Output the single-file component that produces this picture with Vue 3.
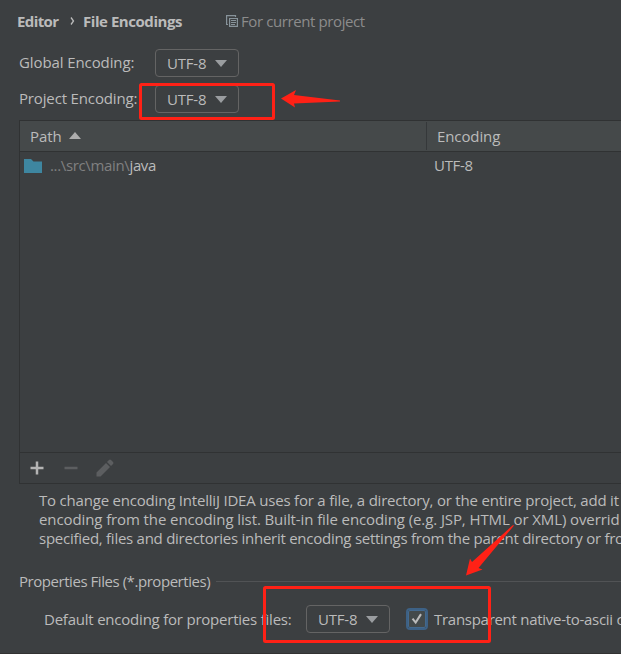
<script setup>
import { ref } from 'vue'

const globalEncoding = ref('UTF-8')
const projectEncoding = ref('UTF-8')
const propertiesEncoding = ref('UTF-8')
const help = [
  'To change encoding IntelliJ IDEA uses for a file, a directory, or the entire project, add it',
  'encoding from the encoding list. Built-in file encoding (e.g. JSP, HTML or XML) overrid',
  'specified, files and directories inherit encoding settings from the parent directory or fro'
]
</script>

<template>
  <main class="settings">
    <header class="crumbs">
      <b class="crumb-root">Editor</b>
      <svg class="chevron" width="6" height="10" viewBox="0 0 6 10"><path d="M1 1.500l2.500 3.500-2.500 3.500" /></svg>
      <b class="crumb-page">File Encodings</b>
      <svg class="copy" width="12" height="12" viewBox="0 0 12 12">
        <path d="M9.5 2V.6H.6v8.9H2M3.6 3.5h7.8v7.9H3.6zM5 5.5h5M5 7.5h5M5 9.5h4" />
      </svg>
      <span class="scope">For current project</span>
    </header>

    <div class="field">
      <label class="lbl">Global Encoding:</label>
      <button class="combo"><span>{{ globalEncoding }}</span><i class="down"></i></button>
    </div>
    <div class="field second">
      <label class="lbl">Project Encoding:</label>
      <button class="combo"><span>{{ projectEncoding }}</span><i class="down"></i></button>
    </div>

    <section class="table">
      <div class="thead">
        <div class="th path"><span>Path</span><i class="up"></i></div>
        <div class="th enc">Encoding</div>
      </div>
      <div class="tbody">
        <div class="tr">
          <svg class="folder" width="18" height="14" viewBox="0 0 18 14"><path d="M0 0h7l2.500 2.500H18V14H0z" /></svg>
          <span class="file"><span class="dim">...\src\main\</span>java</span>
          <span class="value">UTF-8</span>
        </div>
      </div>
      <div class="tools">
        <svg width="14" height="14" viewBox="0 0 14 14"><path class="plus" d="M7 .5v13M.5 7h13" /></svg>
        <svg width="14" height="14" viewBox="0 0 14 14"><path class="minus" d="M.5 7h13" /></svg>
        <svg class="edit" width="18" height="18" viewBox="0 0 18 18"><path class="pencil" d="M.5 13.500L10 4l4 4-9.500 9.500h-4zM11 3l2-2q1-1 2 0l2 2q1 1 0 2l-2 2z" /></svg>
      </div>
    </section>

    <div class="help">
      <p v-for="(line, i) in help" :key="i" :class="'h' + i">{{ line }}</p>
    </div>

    <div class="group"><span>Properties Files (*.properties)</span><i></i></div>
    <div class="props">
      <label class="default">Default encoding for properties files:</label>
      <button class="combo"><span>{{ propertiesEncoding }}</span><i class="down"></i></button>
      <span class="check"><svg width="18" height="18" viewBox="0 0 18 18"><path d="M4 8.500l3.500 4.500L13.500 3.500" /></svg></span>
      <label class="ascii">Transparent native-to-ascii c</label>
    </div>

    <svg class="marks" width="621" height="654" viewBox="0 0 621 654">
      <rect x="140.500" y="84.500" width="133" height="34" rx="1" />
      <rect x="264.500" y="587.500" width="225" height="54" rx="1" />
      <path d="M281 98.500L296 90l-2 5 46 5.500v1L294 103.500l1 4z" />
      <path d="M466 575.500l4-17 2 3.500L513 525l1 .5L478.500 568l4 1.500z" />
    </svg>
  </main>
</template>

<style>
body { background: #3c3f41; overflow: hidden; }
</style>

<style scoped>
.settings {
  position: relative;
  box-sizing: border-box;
  width: 621px;
  height: 654px;
  overflow: hidden;
  padding-top: 9px;
  background: #3c3f41;
  border-bottom: 1px solid #323232;
  color: #bbb;
  font: 15px/20px "Open Sans", "Noto Sans", sans-serif;
  white-space: nowrap;
}
.crumbs { display: flex; align-items: center; height: 24px; padding-left: 17px; }
.crumb-root { width: 53px; letter-spacing: -.6px; }
.chevron { margin-right: 7px; }
.chevron path { fill: none; stroke: #bbb; stroke-width: 1.3; }
.crumb-page { width: 143px; letter-spacing: -.45px; }
.copy { margin-right: 3px; flex: none; }
.copy path { fill: none; stroke: #87939a; stroke-width: 1.2; }
.scope { color: #8c8c8c; letter-spacing: -.4px; }
.field { display: flex; align-items: center; height: 28px; margin-top: 16px; padding-left: 19px; }
.field.second { margin-top: 8px; }
.lbl { width: 136px; padding-bottom: 2px; letter-spacing: -.1px; }
.field.second .lbl { letter-spacing: -.15px; }
.combo {
  display: flex;
  align-items: center;
  justify-content: space-between;
  box-sizing: border-box;
  flex: none;
  width: 84px;
  height: 28px;
  padding: 0 11px;
  border: 1px solid #646464;
  border-radius: 4px;
  background: #3c3f41;
  color: #bbb;
  font: inherit;
  letter-spacing: -.2px;
}
.combo span { padding-bottom: 1px; }
.down, .up { border: 6px solid transparent; }
.down { border-top: 7px solid #9a9da0; border-bottom: 0; }
.up { margin: 0 0 2px 7px; border-width: 0 6px 7px; border-bottom-color: #adadad; }
.table { margin: 7px 0 0 19px; border: 1px solid #303233; border-right: 0; }
.thead { display: flex; align-items: center; height: 30px; background: #45494a; border-bottom: 1px solid #303233; }
.th { display: flex; align-items: center; box-sizing: border-box; height: 28px; padding-left: 10px; letter-spacing: -.1px; }
.th.path { width: 407px; border-right: 1px solid #35383a; }
.tbody { height: 300px; }
.tr { display: flex; align-items: center; height: 27px; padding-left: 4px; }
.folder { margin-right: 8px; }
.folder path { fill: #3e86a0; }
.file { width: 384px; padding-bottom: 1px; letter-spacing: -.35px; }
.dim { color: #808080; }
.value { padding-bottom: 1px; letter-spacing: -.3px; }
.tools { display: flex; align-items: center; height: 30px; border-top: 1px solid #303233; padding-left: 10px; gap: 20px; }
.tools svg { flex: none; }
.tools .edit { margin-left: -2px; }
.tools path { fill: none; stroke-width: 2.5; }
.tools .plus { stroke: #b4b4b4; }
.tools .minus { stroke: #5c5e60; }
.tools .pencil { fill: #5c5e60; }
.help { margin-top: 7px; padding-left: 39px; line-height: 19px; }
.help p { margin: 0; letter-spacing: -.2px; }
.help .h1 { letter-spacing: -.1px; }
.help .h2 { letter-spacing: -.26px; }
.group { display: flex; align-items: center; height: 24px; margin-top: 21px; padding-left: 19px; letter-spacing: -.45px; }
.group i { flex: 1; height: 1px; margin: 1px 0 0 6px; background: #515355; }
.props { display: flex; align-items: center; height: 28px; margin-top: 12px; padding-left: 44px; }
.default { flex: none; width: 262px; padding-bottom: 1px; letter-spacing: -.22px; }
.check {
  display: flex;
  flex: none;
  box-sizing: border-box;
  width: 22px;
  height: 22px;
  margin: 0 6px 0 16px;
  border: 2px solid #3d6185;
  border-radius: 4px;
}
.check svg { box-sizing: border-box; border: 1px solid #43698e; border-radius: 2px; background: #43494a; }
.check path { fill: none; stroke: #bbb; stroke-width: 2.3; }
.ascii { letter-spacing: -.28px; }
.marks { position: absolute; inset: 0; pointer-events: none; }
.marks rect { fill: none; stroke: #ff2116; stroke-width: 3; }
.marks path { fill: #ff2116; }
</style>
